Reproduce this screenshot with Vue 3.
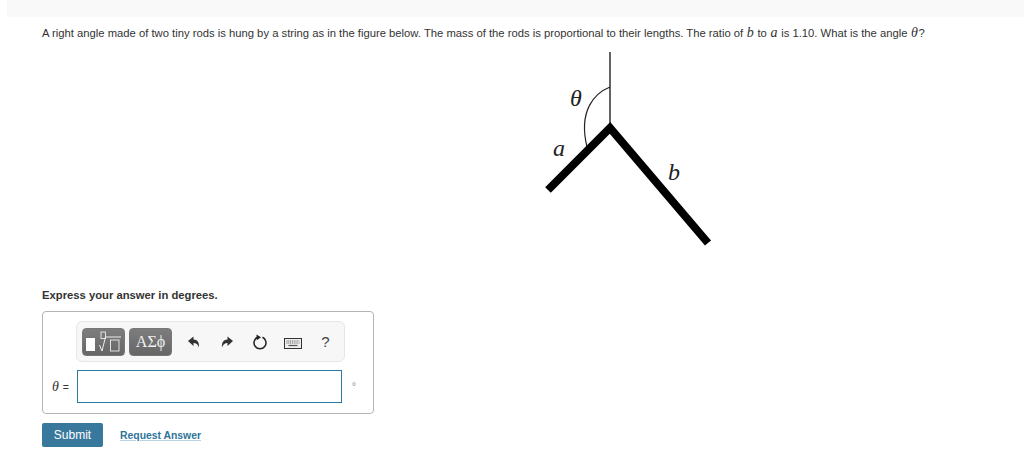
<template>
  <div class="page">
    <div class="topbar"></div>
    <div class="content">
      <p class="question">
        A right angle made of two tiny rods is hung by a string as in the figure below. The mass of the rods is proportional to their lengths. The ratio of <i class="mvar">b</i> to <i class="mvar">a</i> is 1.10. What is the angle <i class="mvar">θ</i>?
      </p>

      <div class="figure">
        <svg width="200" height="205" viewBox="0 0 200 205">
          <path d="M68 0V73" stroke="#222" stroke-width="1.4" fill="none" />
          <path d="M68 35C53 41 36 58 45 95" stroke="#222" stroke-width="1.2" fill="none" />
          <path d="M6 138L68 76L166 191" stroke="#000" stroke-width="8" fill="none" />
          <text x="28" y="54" class="fig-label">θ</text>
          <text x="11" y="104" class="fig-label">a</text>
          <text x="126" y="128" class="fig-label">b</text>
        </svg>
      </div>

      <p class="hint">Express your answer in degrees.</p>

      <div class="answer-box">
        <div class="toolbar">
          <button class="tool-btn tool-templates" type="button">
            <svg width="37" height="22" viewBox="0 0 37 22">
              <rect x="1" y="7" width="9" height="13" fill="#fff" />
              <rect x="16" y="1" width="4.500" height="6.500" fill="none" stroke="#eee" stroke-width="0.9" />
              <path d="M14.500 14L17 20L20.500 6H36" fill="none" stroke="#eee" stroke-width="1" />
              <rect x="25.500" y="9" width="8.500" height="11" fill="none" stroke="#eee" stroke-width="0.9" />
            </svg>
          </button>
          <button class="tool-btn tool-symbols" type="button">ΑΣϕ</button>
          <div class="tool-icons">
            <svg width="14" height="14" viewBox="0 0 14 14">
              <path d="M1 6L6.500 1.500V4.500C10.500 4.500 12.500 7.500 12 12.500C11 9.500 9.500 8 6.500 8V11Z" fill="#333" />
            </svg>
            <svg width="14" height="14" viewBox="0 0 14 14">
              <path d="M13 6L7.500 1.500V4.500C3.500 4.500 1.500 7.500 2 12.500C3 9.500 4.500 8 7.500 8V11Z" fill="#333" />
            </svg>
            <svg width="16" height="16" viewBox="0 0 16 16">
              <path d="M5.500 3.300A6 6 0 1 0 10.500 3.300" fill="none" stroke="#222" stroke-width="1.500" />
              <path d="M4.500 0.500L9 3.200L4.800 6.200Z" fill="#222" />
            </svg>
            <svg class="tool-keyboard" width="18" height="11" viewBox="0 0 18 11">
              <rect x="0.500" y="0.500" width="17" height="10" fill="#eee" stroke="#333" />
              <path d="M2.500 3H15.500M2.500 5H15.500" stroke="#555" stroke-dasharray="1 0.800" />
              <path d="M4.500 7.500H13.500" stroke="#555" stroke-width="1.200" />
            </svg>
            <span class="tool-help">?</span>
          </div>
        </div>

        <div class="input-row">
          <span class="input-label"><i class="mvar">θ</i> =</span>
          <div class="input-field"></div>
          <span class="unit">°</span>
        </div>
      </div>

      <div class="actions">
        <button class="submit" type="button">Submit</button>
        <a class="request" href="#" @click.prevent>Request Answer</a>
      </div>
    </div>
  </div>
</template>

<script setup>
</script>

<style>
html, body { background: #fff; }
</style>

<style scoped>
.page {
  height: 465px;
  overflow: hidden;
  font-family: "Liberation Sans", Arial, sans-serif;
  color: #333;
}
.topbar { height: 17px; margin-left: 7px; background: #f9f9f9; }
.content { padding: 0 42px; }
.question { margin: 9px 0 0; font-size: 11.25px; line-height: 14px; white-space: nowrap; }
.question .mvar { margin: 0 0.5px; }
.mvar { font-family: "Liberation Serif", serif; font-size: 14px; font-style: italic; }
.figure { display: flex; padding-left: 500px; margin-top: 12px; }
.fig-label { font-family: "Liberation Serif", serif; font-style: italic; font-size: 24px; fill: #222; }
.hint { margin: 31px 0 0; font-size: 11.25px; line-height: 14px; font-weight: 700; }
.answer-box {
  box-sizing: border-box;
  width: 332px;
  height: 103px;
  margin-top: 9px;
  padding: 9px 0 0 33px;
  border: 1px solid #b3b3b3;
  border-radius: 4px;
}
.toolbar {
  box-sizing: border-box;
  display: flex;
  align-items: center;
  gap: 4px;
  width: 269px;
  height: 41px;
  padding-left: 5px;
  background: #f7f7f7;
  border: 1px solid #e6e6e6;
  border-radius: 6px;
}
.tool-btn {
  display: flex;
  align-items: center;
  justify-content: center;
  width: 43px;
  height: 28px;
  padding: 0;
  border: 1px solid #777;
  border-radius: 4px;
  background: linear-gradient(#7d7d7d, #666);
  color: #f0f0f0;
  font-family: "Liberation Serif", serif;
  font-size: 16px;
}
.tool-icons {
  display: grid;
  grid-template-columns: repeat(5, 33px);
  justify-items: center;
  align-items: center;
  margin-left: 1px;
}
.tool-keyboard { margin-top: 3px; }
.tool-help { font-size: 15px; color: #444; }
.input-row { display: flex; align-items: center; margin-top: 8px; margin-left: -33px; }
.input-label { box-sizing: border-box; width: 34px; padding-left: 9px; font-size: 10.5px; word-spacing: 1px; white-space: nowrap; }
.input-field {
  box-sizing: border-box;
  width: 265px;
  height: 33px;
  border: 1px solid #2a7ba3;
  background: #fff;
}
.unit { margin-left: 10px; font-size: 10px; color: #888; }
.actions { display: flex; align-items: center; gap: 17px; margin-top: 9px; }
.submit {
  width: 61px;
  height: 24px;
  padding: 0;
  border: none;
  border-radius: 2px;
  background: #38789c;
  color: #fff;
  font-family: inherit;
  font-size: 12px;
}
.request {
  font-size: 10.4px;
  font-weight: 700;
  color: #2f7599;
  text-decoration: underline;
  text-decoration-color: #b9d3e0;
}
</style>
